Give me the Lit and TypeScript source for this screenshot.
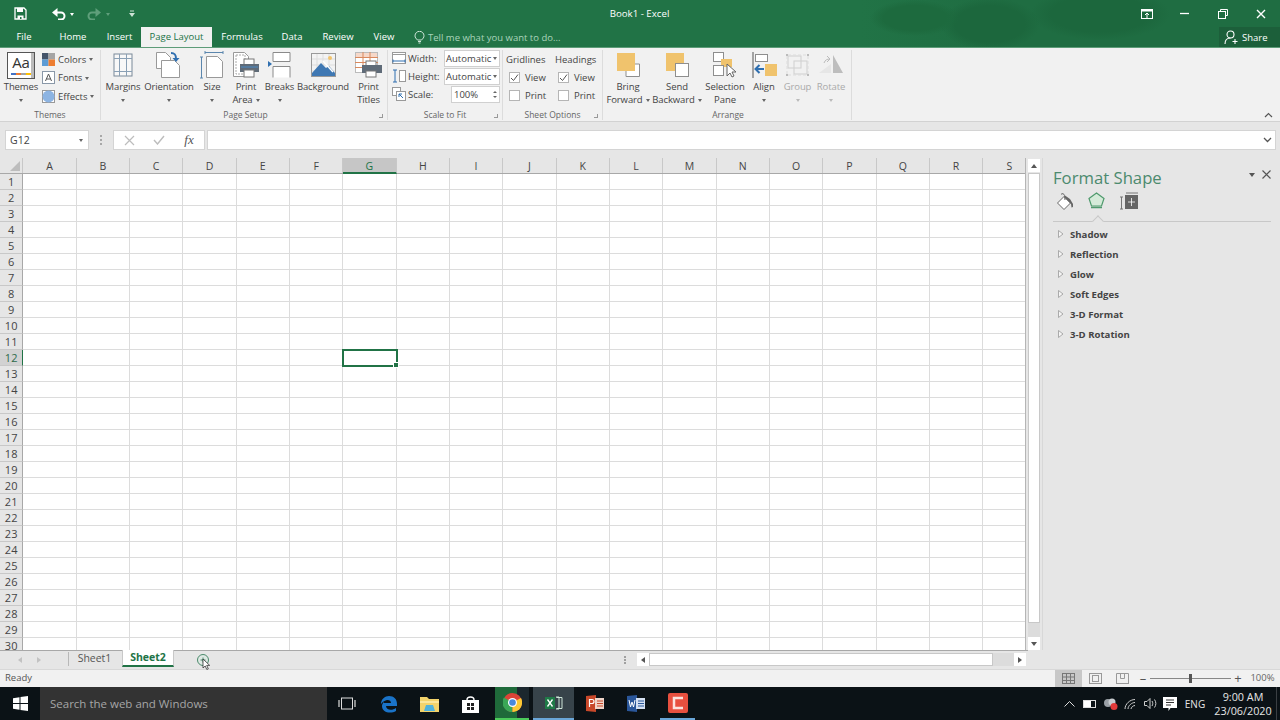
import { LitElement, html, css } from "lit";
import { customElement } from "lit/decorators.js";

const caret = html`<span class="caret"></span>`;
const S = "#7b8a99";

const icons: Record<string, any> = {
  margins: html`<svg width="22" height="26" viewBox="0 0 22 26"><rect x="2" y="2" width="18" height="22" fill="#f8f8f8" stroke="${S}"/><path d="M7.5 2v22M14.5 2v22M2 6.5h18M2 19.5h18" stroke="#8aa0b5" fill="none"/></svg>`,
  orientation: html`<svg width="28" height="28" viewBox="0 0 28 28"><path d="M1.5 1.5h9l5 5v11h-14z" fill="#fff" stroke="#999"/><path d="M6.5 9.5h13l5 5v12h-18z" fill="#fff" stroke="#999"/><path d="M16 2c4 0 5 2 5 6" stroke="#2f6fb0" stroke-width="2" fill="none"/><path d="M17.500 7h7l-3.500 4z" fill="#2f6fb0"/></svg>`,
  size: html`<svg width="24" height="28" viewBox="0 0 24 28"><path d="M5 1.500h18M5 0v3M23 0v3M1.500 6v21M0 6h3M0 27h3" stroke="#5b86ad" fill="none"/><path d="M6.500 5.500h11l5 5v16h-16z" fill="#fff" stroke="#999"/></svg>`,
  printArea: html`<svg width="28" height="28" viewBox="0 0 28 28"><path d="M1.500 1.500h11l4 4v20h-15z" fill="#fff" stroke="#999"/><rect x="4" y="4" width="9" height="19" fill="none" stroke="#aaa" stroke-dasharray="2 1"/><rect x="12" y="8" width="10" height="7" fill="#fff" stroke="#777"/><rect x="8" y="13" width="19" height="8" fill="#5f6b78"/><rect x="12" y="19" width="10" height="7" fill="#fff" stroke="#777"/><path d="M9 16h17" stroke="#4a8cc7"/></svg>`,
  breaks: html`<svg width="24" height="26" viewBox="0 0 24 26"><path d="M5 .5h17v9H5zM5 25.500v-11h17v11" fill="#fff" stroke="#8a8a8a"/><path d="M0 9l4 3-4 3z" fill="#2f6fb0"/></svg>`,
  background: html`<svg width="25" height="24" viewBox="0 0 25 24"><rect x=".5" y=".5" width="24" height="23" fill="#f3f3f3" stroke="#999"/><path d="M1 6h23M1 12h23M1 18h23M6 1v22M12 1v22M18 1v22" stroke="#ddd"/><circle cx="19" cy="5" r="2" fill="#f2c36b"/><path d="M1 20l9-10 5 5 3-2 6 7v3H1z" fill="#3f78b3"/><path d="M12 8l10 11" stroke="#fff" stroke-width="1.500"/></svg>`,
  printTitles: html`<svg width="27" height="26" viewBox="0 0 27 26"><rect x=".5" y=".5" width="22" height="20" fill="#fff" stroke="#bbb"/><path d="M1 1h21v4H1z" fill="#f6d8c9"/><path d="M0 5.500h23M0 10.500h23M0 15.500h23M8 0v21M15 0v21" stroke="#d9895e"/><rect x="11" y="9" width="10" height="6" fill="#fff" stroke="#777"/><rect x="7" y="13" width="20" height="8" fill="#5f6b78"/><rect x="11" y="19" width="10" height="6" fill="#fff" stroke="#777"/></svg>`,
  bring: html`<svg width="23" height="24" viewBox="0 0 23 24"><path d="M18 11h4.500v12.500H9V18" fill="#fff" stroke="#8e8e8e"/><rect width="18" height="18" fill="#f0c36d"/></svg>`,
  send: html`<svg width="23" height="24" viewBox="0 0 23 24"><rect width="18" height="18" fill="#f0c36d"/><rect x="9.500" y="10.500" width="13" height="13" fill="#fff" stroke="#8e8e8e"/></svg>`,
  selection: html`<svg width="24" height="26" viewBox="0 0 24 26"><rect x=".5" y=".5" width="10" height="9" fill="#fff" stroke="#8e8e8e"/><rect x="8" y="7" width="11" height="8" fill="#f0c36d"/><rect x=".5" y="13.500" width="10" height="10" fill="#fff" stroke="#8e8e8e"/><path d="M14 12l0 12 3-3 2 4 2-1-2-4 4 0z" fill="#fff" stroke="#666"/></svg>`,
  align: html`<svg width="25" height="26" viewBox="0 0 25 26"><path d="M1 0v26" stroke="#555"/><rect x="3.500" y="2.500" width="12" height="7" fill="#fff" stroke="#8e8e8e"/><rect x="13" y="12" width="12" height="12" fill="#f0c36d"/><path d="M12 17H4M7.500 13l-4 4 4 4" stroke="#2f6fb0" stroke-width="2" fill="none"/></svg>`,
  group: html`<svg width="25" height="24" viewBox="0 0 25 24"><rect x="3" y="3" width="13" height="12" fill="none" stroke="#cfcfcf"/><rect x="9" y="8" width="13" height="13" fill="none" stroke="#cfcfcf"/><path d="M1 1h2v2H1zM22 1h2v2h-2zM1 21h2v2H1zM22 21h2v2h-2z" fill="#bbb"/><path d="M3 2h19M2 3v18M23 3v18M3 22h19" stroke="#ddd" stroke-dasharray="3 2"/></svg>`,
  rotate: html`<svg width="26" height="20" viewBox="0 0 26 20"><path d="M15 0L25 18H15z" fill="#bdbdbd"/><path d="M1 18L13 9v9z" fill="#e6e6e6"/><path d="M6 8c1-3 3-4 6-4M9 1l3 3-3 3" stroke="#bbb" fill="none"/></svg>`,
};

const pageSetup = [
  ["Margins", "", 38, "margins"],
  ["Orientation", "", 54, "orientation"],
  ["Size", "", 32, "size"],
  ["Print", "Area", 36, "printArea"],
  ["Breaks", "", 31, "breaks"],
  ["Background", "-", 56, "background"],
  ["Print", "Titles", 35, "printTitles"],
];
const arrange = [
  ["Bring", "Forward", 46, "bring", 0, 1],
  ["Send", "Backward", 52, "send", 0, 1],
  ["Selection", "Pane", 44, "selection", 0, 0],
  ["Align", "", 34, "align", 0, 0],
  ["Group", "", 33, "group", 1, 0],
  ["Rotate", "", 34, "rotate", 1, 0],
];
const COLS = "ABCDEFGHIJKLMNOPQRS".split("");
const ROWS = Array.from({ length: 30 }, (_, i) => i + 1);
const TABS: [string, number][] = [["File", 48], ["Home", 50], ["Insert", 43], ["Page Layout", 71], ["Formulas", 60], ["Data", 40], ["Review", 52], ["View", 40]];
const PANEL = ["Shadow", "Reflection", "Glow", "Soft Edges", "3-D Format", "3-D Rotation"];

@customElement("app-root")
export class AppRoot extends LitElement {
  static styles = css`
    :host { display: block; width: 1280px; height: 720px; overflow: hidden; font-family: "Open Sans", "Noto Sans", sans-serif; font-size: 9.500px; color: #444; background: #e6e6e6; }
    * { box-sizing: border-box; }
    svg { display: block; }
    .app { width: 1280px; height: 720px; display: flex; flex-direction: column; }

    .head { height: 48px; flex: none; color: #fff; border-bottom: 1px solid #5d9c78;
      background-color: #217346;
      background-image:
        radial-gradient(ellipse 45px 18px at 915px 18px, #1d6a3e 70%, transparent 100%),
        radial-gradient(ellipse 50px 26px at 990px 24px, #1c673d 70%, transparent 100%),
        radial-gradient(ellipse 70px 26px at 1100px 14px, #1c673d 70%, transparent 100%),
        linear-gradient(90deg, #217346 0, #217346 860px, #1f6d42 1000px, #1f6d42 1280px); }
    .title { height: 27px; display: flex; align-items: center; padding-left: 14px; position: relative; }
    .qat { display: flex; align-items: center; width: 559px; gap: 0; }
    .qat .q1 { width: 38px; } .qat .q2 { width: 18px; } .qat .q3 { width: 17px; } .qat .q4 { width: 19px; } .qat .q5 { width: 23px; }
    .qcaret { display: block; width: 0; height: 0; border: 2.5px solid transparent; border-top: 3px solid #fff; margin-top: 3px; }
    .qcaret.dim { border-top-color: #5f9f7b; }
    .doc { width: 129px; text-align: center; font-size: 9.700px; margin-left: 2px; }
    .winbtns { margin-left: auto; display: flex; align-items: center; }
    .winbtns div { width: 38px; display: flex; justify-content: center; }
    .tabs { height: 20px; display: flex; align-items: stretch; font-size: 9.500px; }
    .tab { display: flex; align-items: center; justify-content: center; padding-bottom: 1px; white-space: nowrap; }
    .tab.active { background: #f1f1f1; color: #217346; }
    .tell { display: flex; align-items: center; gap: 3px; margin-left: 10px; color: #a9d3bb; font-size: 9.500px; }
    .share { margin-left: auto; width: 61px; background: #1c5f3a; display: flex; align-items: center; padding-left: 5px; gap: 3px; font-size: 9.500px; }

    .ribbon { height: 74px; flex: none; background: #f1f1f1; display: flex; padding-top: 2px; border-bottom: 1px solid #d2d2d2; position: relative; }
    .grp { display: flex; flex-direction: column; border-right: 1px solid #dcdcdc; height: 70px; position: relative; }
    .gbody { height: 58px; flex: none; display: flex; }
    .glabel { height: 12px; flex: none; margin-top: 1px; line-height: 12px; text-align: center; font-size: 8.500px; color: #666; }
    .launch { position: absolute; right: 4px; bottom: 2px; width: 4px; height: 4px; border-right: 1px solid #999; border-bottom: 1px solid #999; }
    .g-themes { width: 101px; } .g-page { width: 287px; padding-left: 3px; } .g-scale { width: 115px; } .g-sheet { width: 100px; } .g-arr { width: 249px; padding-left: 2px; }
    .big { display: flex; flex-direction: column; align-items: center; font-size: 9.500px; letter-spacing: -.1px; line-height: 13px; white-space: nowrap; flex: none; }
    .big.dis { color: #aaa; }
    .big.dis .caret { border-top-color: #bbb; }
    .ico { height: 30px; display: flex; align-items: center; justify-content: center; width: 100%; }
    .lbl { height: 13px; display: flex; align-items: center; justify-content: center; gap: 3px; }
    .caret { display: inline-block; width: 0; height: 0; border: 2.500px solid transparent; border-top: 3px solid #666; margin-top: 3px; }
    .themes { width: 42px; }
    .aa { width: 28px; height: 27px; border: 1px solid #555; background: #fff; box-shadow: inset -3px 0 0 #bbb; display: flex; flex-direction: column; align-items: center; font-size: 15px; line-height: 19px; color: #333; }
    .strip { width: 20px; height: 2px; margin-top: 1px; background: linear-gradient(90deg, #4472c4 25%, #ed7d31 25% 50%, #a5a5a5 50% 75%, #ffc000 75%); }
    .themeopts { display: flex; flex-direction: column; }
    .topt { height: 18.500px; display: flex; align-items: center; gap: 3px; white-space: nowrap; }
    .scalecol { display: flex; flex-direction: column; padding: 0 0 0 4px; width: 100%; margin-top: -1px; }
    .srow { height: 18px; display: flex; align-items: center; gap: 2px; flex: none; }
    .srow .sl { width: 34px; }
    .sel { width: 56px; height: 17px; background: #fff; border: 1px solid #d0d0d0; display: flex; align-items: center; justify-content: space-between; padding: 0 2px 0 1px; overflow: hidden; white-space: nowrap; }
    .sel.num { width: 49px; margin-left: 7px; padding-left: 2px; }
    .spin { display: flex; flex-direction: column; gap: 3px; }
    .spin i { display: block; width: 0; height: 0; border: 2px solid transparent; }
    .spin i:first-child { border-bottom: 2.500px solid #666; border-top: 0; }
    .spin i:last-child { border-top: 2.500px solid #666; border-bottom: 0; }
    .sheetcol { display: flex; flex-direction: column; padding-left: 3px; width: 49px; }
    .sh { height: 18px; flex: none; display: flex; align-items: center; white-space: nowrap; padding-top: 1px; }
    .chk { height: 18px; flex: none; display: flex; align-items: center; gap: 5px; padding-left: 3px; }
    .box { width: 11px; height: 11px; background: #fff; border: 1px solid #b5b5b5; display: flex; align-items: center; justify-content: center; }
    .collapse { position: absolute; right: 7px; bottom: 3px; }

    .fbar { height: 36px; flex: none; display: flex; padding: 8px 4px 8px 5px; background: #e6e6e6; }
    .namebox { width: 84px; background: #fff; border: 1px solid #d4d4d4; display: flex; align-items: center; justify-content: space-between; padding: 0 5px 0 4px; font-size: 10.500px; }
    .dots { width: 24px; display: flex; flex-direction: column; gap: 2px; align-items: center; justify-content: center; }
    .dots i { width: 2px; height: 2px; background: #a8a8a8; display: block; }
    .fxbox { width: 92px; background: #fff; border: 1px solid #d4d4d4; display: flex; align-items: center; }
    .fxbox div { width: 31px; display: flex; justify-content: center; }
    .fx { font-family: "Liberation Serif", serif; font-style: italic; font-size: 13px; color: #555; }
    .finput { flex: 1; margin-left: 2px; background: #fff; border: 1px solid #d4d4d4; display: flex; align-items: center; justify-content: flex-end; padding-right: 3px; }

    .work { height: 511px; flex: none; display: flex; }
    .left { width: 1043px; display: flex; flex-direction: column; }
    .gridwrap { height: 492px; flex: none; display: flex; }
    .grid { width: 1026px; height: 492px; overflow: hidden; background: #fff; border-right: 1px solid #b5b5b5; }
    .hrow { display: flex; height: 16px; background: #e6e6e6; border-bottom: 1px solid #a8a8a8; }
    .corner { width: 23.300px; flex: none; border-right: 1px solid #c8c8c8; position: relative; }
    .corner::after { content: ""; position: absolute; right: 2px; bottom: 2px; border: 5px solid transparent; border-right-color: #bdbdbd; border-bottom-color: #bdbdbd; }
    .chead { width: 53.330px; flex: none; text-align: center; font-size: 10.500px; line-height: 16px; border-right: 1px solid #c8c8c8; }
    .chead.on { background: #c6c6c6; border-bottom: 2px solid #217346; color: #217346; height: 16px; }
    .row { display: flex; height: 16px; }
    .rhead { width: 23.300px; flex: none; background: #e6e6e6; border-right: 1px solid #a8a8a8; border-bottom: 1px solid #c8c8c8; text-align: center; font-size: 11px; line-height: 15px; }
    .rhead.on { background: #d2d2d2; color: #2d6b4a; border-right: 1px solid #217346; }
    .cell { width: 53.330px; flex: none; border-right: 1px solid #dcdcdc; border-bottom: 1px solid #dcdcdc; position: relative; }
    .cell.sel2 { outline: 2px solid #217346; outline-offset: -1px; z-index: 2; }
    .cell.sel2::after { content: ""; position: absolute; right: -3px; bottom: -3px; width: 4px; height: 4px; background: #217346; border: 1px solid #fff; box-sizing: content-box; }
    .vs { width: 17px; padding: 1px 2px 0 2px; display: flex; flex-direction: column; background: #e6e6e6; border-right: 1px solid #d8d8d8; }
    .vs .arrow { height: 13px; background: #fff; display: flex; align-items: center; justify-content: center; flex: none; }
    .vs .thumb { height: 450px; background: #fff; border: 1px solid #c8c8c8; margin-top: 1px; flex: none; }
    .vs .track { flex: 1; background: #dcdcdc; }
    .up { width: 0; height: 0; border: 3px solid transparent; border-bottom: 4px solid #555; border-top: 0; }
    .dn { width: 0; height: 0; border: 3.500px solid transparent; border-top: 4px solid #555; border-bottom: 0; }
    .lt { width: 0; height: 0; border: 3px solid transparent; border-right: 4px solid #555; border-left: 0; }
    .rt { width: 0; height: 0; border: 3px solid transparent; border-left: 4px solid #555; border-right: 0; }
    .sheets { height: 19px; flex: none; display: flex; background: #e6e6e6; border-top: 1px solid #a8a8a8; width: 1028px; position: relative; font-size: 10.500px; }
    .navs { width: 68px; display: flex; align-items: center; padding-left: 18px; gap: 15px; }
    .navs .lt { border-right-color: #c2c2c2; } .navs .rt { border-left-color: #c2c2c2; }
    .vbar { width: 1px; height: 14px; background: #b8b8b8; margin: 1px 0 0 0; }
    .tabsheet { width: 51px; height: 13px; display: flex; align-items: center; justify-content: center; color: #555; }
    .tabsheet.on { width: 52px; height: 17px; background: #fff; color: #217346; font-weight: 700; border: 1px solid #c8c8c8; border-top: 0; border-bottom: 2px solid #217346; margin: -1px 0 0 2px; padding-bottom: 1px; }
    .plus { margin-left: 21px; margin-top: 1px; position: relative; width: 20px; }
    .hs { margin-left: auto; display: flex; align-items: center; width: 415px; padding: 0 2px 1px 0; height: 100%; }
    .hdots { display: flex; flex-direction: column; gap: 1px; width: 24px; align-items: center; }
    .hdots i { width: 2px; height: 2px; background: #a0a0a0; display: block; }
    .hsbtn { width: 12px; height: 13px; background: #fff; display: flex; align-items: center; justify-content: center; flex: none; }
    .hthumb { width: 344px; height: 13px; background: #fff; border: 1px solid #c8c8c8; flex: none; }
    .htrack { flex: 1; height: 13px; background: #dcdcdc; }

    .panel { width: 237px; padding: 8px 10px 0 10px; position: relative; background: #e6e6e6; }
    .ptitle { font-size: 16.700px; line-height: 23px; color: #4c8a6e; }
    .pctl { position: absolute; top: 12px; right: 9px; display: flex; gap: 7px; align-items: center; }
    .picons { display: flex; height: 22px; align-items: center; padding-left: 3px; margin-top: 1px; }
    .picons div { width: 32px; }
    .pdiv { height: 10px; border-bottom: 1px solid #c8c8c8; position: relative; margin: 0 0 2px 0; width: 218px; }
    .pdiv::after { content: ""; position: absolute; left: 41px; bottom: -4px; width: 7px; height: 7px; background: #e6e6e6; border-left: 1px solid #c8c8c8; border-top: 1px solid #c8c8c8; transform: rotate(45deg); }
    .pitem { height: 20px; display: flex; align-items: center; gap: 6px; padding-left: 5px; font-weight: 700; font-size: 9.600px; color: #444; }

    .status { height: 18px; flex: none; background: #f1f1f1; border-top: 1px solid #d8d8d8; display: flex; align-items: stretch; padding-left: 5px; font-size: 9.500px; color: #555; }
    .ready { width: 1050px; line-height: 16px; flex: none; }
    .vw { width: 27px; flex: none; display: flex; align-items: center; justify-content: center; }
    .vw.on { background: #c8c8c8; }
    .zoom { display: flex; align-items: center; padding-left: 3px; width: 106px; flex: none; }
    .ztrack { width: 81px; flex: none; height: 1px; background: #888; margin: 0 3px; display: flex; justify-content: center; align-items: center; }
    .zthumb { width: 3px; height: 9px; background: #555; flex: none; }
    .zp { font-size: 13px; color: #555; width: 8px; line-height: 13px; text-align: center; flex: none; }
    .zpct { width: 38px; flex: none; padding-left: 3px; text-align: center; line-height: 16px; color: #666; }

    .taskbar { height: 33px; flex: none; background: #0b1216; display: flex; align-items: center; color: #e6e6e6; }
    .start { width: 40px; display: flex; justify-content: center; }
    .search { width: 287px; height: 33px; background: #333; color: #a6a6a6; font-size: 11.500px; display: flex; align-items: center; padding-left: 10px; }
    .tb { height: 33px; display: flex; align-items: center; justify-content: center; flex: none; position: relative; }
    .t-view { width: 40px; } .t-edge { width: 42px; } .t-folder { width: 41px; } .t-store { width: 41px; }
    .t-chrome { width: 34px; margin: 0 4px 0 4px; background: linear-gradient(90deg, #1f6a3a 65%, #1c282e 65%); border-bottom: 2px solid #4ccb5a; }
    .t-excel { width: 41px; background: #37434a; border-bottom: 2px solid #6aa6d8; }
    .t-ppt { width: 41px; } .t-word { width: 41px; } .t-cam { border-bottom: 2px solid #6aa6d8; width: 35px; margin-left: 4px; }
    .tray { margin-left: auto; display: flex; align-items: center; height: 33px; margin-right: 3px; border-right: 1px solid #3a3f43; }
    .tray > div { display: flex; justify-content: center; align-items: center; flex: none; }
    .t20 { width: 20px; } .t22 { width: 22px; } .t18 { width: 18px; }
    .eng { font-size: 10px; width: 28px; }
    .clock { width: 66px; flex-direction: column; font-size: 10.800px; line-height: 14px; margin-left: 1px; text-align: center; }
  `;

  private big(b: any[]) {
    const [l1, l2, w, ic, dis, hasCaret] = b;
    return html`<div class="big ${dis ? "dis" : ""}" style="width:${w}px">
      <div class="ico">${icons[ic]}</div>
      <div class="lbl">${l1}</div>
      <div class="lbl">${l2 === "-" ? "" : l2 ? html`${l2}${hasCaret || (l1 === "Print" && l2 === "Area") ? caret : ""}` : caret}</div>
    </div>`;
  }

  private ribbon() {
    return html`<div class="ribbon">
      <div class="grp g-themes">
        <div class="gbody">
          <div class="big themes">
            <div class="ico"><div class="aa">Aa<span class="strip"></span></div></div>
            <div class="lbl">Themes</div>
            <div class="lbl">${caret}</div>
          </div>
          <div class="themeopts">
            <div class="topt"><svg width="13" height="13" viewBox="0 0 13 13"><rect width="6.500" height="6.500" fill="#44546a"/><rect x="6.500" width="6.500" height="6.500" fill="#a5a5a5"/><rect y="6.500" width="6.500" height="6.500" fill="#5b9bd5"/><rect x="6.500" y="6.500" width="6.500" height="6.500" fill="#ed7d31"/></svg>Colors ${caret}</div>
            <div class="topt"><svg width="13" height="13" viewBox="0 0 13 13"><rect x=".5" y=".5" width="12" height="12" fill="#fff" stroke="#8a98a8"/><path d="M3.500 10L6.500 3l3 7M4.500 8h4" stroke="#555" fill="none"/></svg>Fonts ${caret}</div>
            <div class="topt"><svg width="13" height="13" viewBox="0 0 13 13"><rect x=".5" y=".5" width="12" height="12" fill="#fff" stroke="#999"/><circle cx="6.500" cy="6.500" r="6" fill="#8db4e2"/></svg>Effects ${caret}</div>
          </div>
        </div>
        <div class="glabel">Themes</div>
      </div>
      <div class="grp g-page">
        <div class="gbody">${pageSetup.map((b) => this.big(b))}</div>
        <div class="glabel">Page Setup</div><span class="launch"></span>
      </div>
      <div class="grp g-scale">
        <div class="gbody"><div class="scalecol">
          <div class="srow"><svg width="14" height="14" viewBox="0 0 14 14"><rect x=".5" y="1.500" width="13" height="11" fill="#fff" stroke="#999"/><path d="M1 3.500h12" stroke="#999"/><path d="M1 10h12M1 8.500v3M13 8.500v3" stroke="#2f6fb0"/></svg><span class="sl">Width:</span><div class="sel">Automatic${caret}</div></div>
          <div class="srow"><svg width="14" height="14" viewBox="0 0 14 14"><path d="M3 1v12M1 1h4M1 13h4" stroke="#2f6fb0"/><rect x="7.500" y="1.500" width="6" height="11" fill="#fff" stroke="#999"/></svg><span class="sl">Height:</span><div class="sel">Automatic${caret}</div></div>
          <div class="srow"><svg width="14" height="14" viewBox="0 0 14 14"><rect x=".5" y=".5" width="8" height="8" fill="#fff" stroke="#999"/><rect x="4.500" y="4.500" width="9" height="9" fill="#fff" stroke="#999"/><path d="M7 7l4 4M7 7h3M7 7v3" stroke="#2f6fb0"/></svg><span class="sl">Scale:</span><div class="sel num">100%<span class="spin"><i></i><i></i></span></div></div>
        </div></div>
        <div class="glabel">Scale to Fit</div><span class="launch"></span>
      </div>
      <div class="grp g-sheet">
        <div class="gbody">
          ${["Gridlines", "Headings"].map((h) => html`<div class="sheetcol">
            <div class="sh">${h}</div>
            <div class="chk"><span class="box"><svg width="9" height="9" viewBox="0 0 9 9"><path d="M1 5l2.500 2.500L8 1.500" stroke="#555" fill="none"/></svg></span>View</div>
            <div class="chk"><span class="box"></span>Print</div>
          </div>`)}
        </div>
        <div class="glabel">Sheet Options</div><span class="launch"></span>
      </div>
      <div class="grp g-arr">
        <div class="gbody">${arrange.map((b) => this.big(b))}</div>
        <div class="glabel">Arrange</div>
      </div>
      <svg class="collapse" width="9" height="6" viewBox="0 0 9 6"><path d="M1 5l3.500-3.500L8 5" stroke="#555" stroke-width="1.200" fill="none"/></svg>
    </div>`;
  }

  private grid() {
    return html`<div class="grid">
      <div class="hrow"><div class="corner"></div>${COLS.map((c) => html`<div class="chead ${c === "G" ? "on" : ""}">${c}</div>`)}</div>
      ${ROWS.map((r) => html`<div class="row">
        <div class="rhead ${r === 12 ? "on" : ""}">${r}</div>
        ${COLS.map((c) => html`<div class="cell ${r === 12 && c === "G" ? "sel2" : ""}"></div>`)}
      </div>`)}
    </div>`;
  }

  render() {
    return html`<div class="app">
      <div class="head">
        <div class="title">
          <div class="qat">
            <div class="q1"><svg width="13" height="13" viewBox="0 0 13 13"><path d="M1 1h9l2 2v9H1z" fill="none" stroke="#fff" stroke-width="1.300"/><path d="M3 1h6v4H3zM3.500 8.500h6V12h-6z" fill="#fff"/><path d="M6 10h1.500v2H6z" fill="#217346"/></svg></div>
            <div class="q2"><svg width="14" height="12" viewBox="0 0 14 12"><path d="M3 4.500h6a3.500 3.500 0 0 1 0 7H6" stroke="#fff" stroke-width="2" fill="none"/><path d="M5.500 0L0 4.500 5.500 9z" fill="#fff"/></svg></div>
            <div class="q3"><span class="qcaret"></span></div>
            <div class="q4"><svg width="14" height="12" viewBox="0 0 14 12"><path d="M11 4.500H5a3.500 3.500 0 0 0 0 7h3" stroke="#5f9f7b" stroke-width="2" fill="none"/><path d="M8.500 0L14 4.500 8.500 9z" fill="#5f9f7b"/></svg></div>
            <div class="q5"><span class="qcaret dim"></span></div>
            <div class="q6"><svg width="6" height="8" viewBox="0 0 6 8"><path d="M1 1h4" stroke="#cfe3d7"/><path d="M0 3h6L3 7z" fill="#cfe3d7"/></svg></div>
          </div>
          <div class="doc">Book1 - Excel</div>
          <div class="winbtns">
            <div><svg width="12" height="10" viewBox="0 0 12 10"><rect x=".5" y=".5" width="11" height="9" fill="none" stroke="#fff"/><path d="M0 1.500h12" stroke="#fff" stroke-width="2"/><path d="M6 9V4M4 6l2-2 2 2" stroke="#fff" fill="none"/></svg></div>
            <div><svg width="10" height="3" viewBox="0 0 10 3"><path d="M0 1.500h9" stroke="#fff" stroke-width="1.300"/></svg></div>
            <div><svg width="10" height="10" viewBox="0 0 10 10"><path d="M2.500 2.500V.5h7v6h-2" fill="none" stroke="#fff"/><rect x=".5" y="2.500" width="7" height="7" fill="none" stroke="#fff"/></svg></div>
            <div><svg width="10" height="10" viewBox="0 0 10 10"><path d="M1 1l8 8M9 1l-8 8" stroke="#fff" stroke-width="1.400"/></svg></div>
          </div>
        </div>
        <div class="tabs">
          ${TABS.map(([t, w]) => html`<div class="tab ${t === "Page Layout" ? "active" : ""}" style="width:${w}px">${t}</div>`)}
          <div class="tell"><svg width="11" height="13" viewBox="0 0 11 13"><path d="M3.500 9C2 7.500 1 6.500 1 4.800a4.500 4.500 0 0 1 9 0C10 6.500 9 7.500 7.500 9z" fill="none" stroke="#cfe6d9"/><path d="M4 10.500h3M4.500 12h2" stroke="#cfe6d9"/></svg>Tell me what you want to do...</div>
          <div class="share"><svg width="15" height="15" viewBox="0 0 15 15"><circle cx="6.500" cy="4.500" r="3.500" fill="none" stroke="#fff" stroke-width="1.100"/><path d="M1 14c0-4 2-6 5.500-6" fill="none" stroke="#fff" stroke-width="1.100"/><path d="M11 9v5M8.500 11.500h5" stroke="#fff" stroke-width="1.100"/></svg>Share</div>
        </div>
      </div>
      ${this.ribbon()}
      <div class="fbar">
        <div class="namebox">G12${caret}</div>
        <div class="dots"><i></i><i></i><i></i></div>
        <div class="fxbox">
          <div><svg width="11" height="11" viewBox="0 0 11 11"><path d="M1 1l9 9M10 1l-9 9" stroke="#bdbdbd" stroke-width="1.200"/></svg></div>
          <div><svg width="12" height="10" viewBox="0 0 12 10"><path d="M1 5l3.500 4L11 1" stroke="#bdbdbd" stroke-width="1.400" fill="none"/></svg></div>
          <div><span class="fx">fx</span></div>
        </div>
        <div class="finput"><svg width="9" height="6" viewBox="0 0 9 6"><path d="M1 1l3.500 3.500L8 1" stroke="#555" stroke-width="1.300" fill="none"/></svg></div>
      </div>
      <div class="work">
        <div class="left">
          <div class="gridwrap">
            ${this.grid()}
            <div class="vs">
              <div class="arrow"><span class="up"></span></div>
              <div class="thumb"></div>
              <div class="track"></div>
              <div class="arrow"><span class="dn"></span></div>
            </div>
          </div>
          <div class="sheets">
            <div class="navs"><span class="lt"></span><span class="rt"></span></div>
            <div class="vbar"></div>
            <div class="tabsheet">Sheet1</div>
            <div class="tabsheet on">Sheet2</div>
            <div class="plus"><svg width="18" height="18" viewBox="0 0 18 18"><circle cx="8" cy="8" r="5.500" fill="#dfe9e4" stroke="#4b8a6c"/><path d="M8 5.500v5M5.500 8h5" stroke="#4b8a6c"/><path d="M8 7v9l2.200-2 1.600 3.500 1.500-.7-1.600-3.400h3z" fill="#fff" stroke="#333" stroke-width=".8"/></svg></div>
            <div class="hs">
              <div class="hdots"><i></i><i></i><i></i></div>
              <div class="hsbtn"><span class="lt"></span></div>
              <div class="hthumb"></div>
              <div class="htrack"></div>
              <div class="hsbtn"><span class="rt"></span></div>
            </div>
          </div>
        </div>
        <div class="panel">
          <div class="ptitle">Format Shape</div>
          <div class="pctl">
            <span class="dn"></span>
            <svg width="9" height="9" viewBox="0 0 9 9"><path d="M.5.500l8 8M8.500.500l-8 8" stroke="#555" stroke-width="1.100"/></svg>
          </div>
          <div class="picons">
            <div><svg width="18" height="17" viewBox="0 0 18 17"><path d="M8 3.500L14.500 10 8 16.500 1.500 10z" fill="#fff" stroke="#666"/><path d="M5 1.500c1-1.500 3-1 3.500 1L9 7" fill="none" stroke="#666"/><path d="M9 2.500l5 3.500 3 5v3l-1.500 .5L15 11l-6-6z" fill="#666"/></svg></div>
            <div><svg width="17" height="18" viewBox="0 0 17 18"><path d="M8.500 1L16 6.500 13.500 14h-10L1 6.500z" fill="#d5ead9" stroke="#4f9a6d" stroke-width="1.200"/><path d="M3 15.500h11" stroke="#4f9a6d" stroke-width="1.500"/></svg></div>
            <div><svg width="18" height="18" viewBox="0 0 18 18"><path d="M1.500 5v12M0 5h3M0 17h3M6 1h12" stroke="#777" fill="none"/><rect x="5" y="3" width="13" height="14" fill="#666"/><path d="M11.500 6v8M8 10h7" stroke="#fff" stroke-width=".8"/></svg></div>
          </div>
          <div class="pdiv"></div>
          ${PANEL.map((p) => html`<div class="pitem"><svg width="6" height="8" viewBox="0 0 6 8"><path d="M.5.500L5 4 .5 7.500z" fill="#f4f4f4" stroke="#999" stroke-width=".8"/></svg>${p}</div>`)}
        </div>
      </div>
      <div class="status">
        <div class="ready">Ready</div>
        <div class="vw on"><svg width="13" height="11" viewBox="0 0 13 11"><rect x=".5" y=".5" width="12" height="10" fill="none" stroke="#777"/><path d="M4.500 0v11M8.500 0v11M0 4h13M0 7.500h13" stroke="#777"/></svg></div>
        <div class="vw"><svg width="13" height="11" viewBox="0 0 13 11"><rect x=".5" y=".5" width="12" height="10" fill="none" stroke="#999"/><rect x="3.500" y="2.500" width="6" height="6" fill="none" stroke="#999"/></svg></div>
        <div class="vw"><svg width="13" height="11" viewBox="0 0 13 11"><path d="M.5 10.500V.5h12v10M4.500 1v4.500h4V1" fill="none" stroke="#999"/><path d="M0 10.500h13" stroke="#999"/></svg></div>
        <div class="zoom"><span class="zp">–</span><div class="ztrack"><span class="zthumb"></span></div><span class="zp">+</span></div>
        <div class="zpct">100%</div>
      </div>
      <div class="taskbar">
        <div class="start"><svg width="15" height="15" viewBox="0 0 15 15"><path d="M0 2.200L6.500 1.200V7H0zM7.500 1L15 0v7H7.500zM0 8h6.500v5.800L0 12.800zM7.500 8H15v7L7.500 14z" fill="#fff"/></svg></div>
        <div class="search">Search the web and Windows</div>
        <div class="tb t-view"><svg width="18" height="13" viewBox="0 0 18 13"><rect x="3.500" y="1" width="11" height="11" fill="none" stroke="#ddd"/><path d="M1 3v7M17 3v7" stroke="#ddd" stroke-width="1.200"/></svg></div>
        <div class="tb t-edge"><svg width="17" height="18" viewBox="0 0 17 18"><path d="M1 9C1 4 5 1 9 1c5 0 8 3 8 8v2H6c0 4 6 5 10 2v3c-5 3-14 2-14-5 0-2 1-3 2-4 0 1 0 1 0 1h7C11 5 6 3 1 9z" fill="#1a73c8"/></svg></div>
        <div class="tb t-folder"><svg width="19" height="16" viewBox="0 0 19 16"><path d="M0 1h7l2 2h10v13H0z" fill="#f3d36b"/><path d="M0 5h19v2H0z" fill="#fbe79d"/><path d="M6 9h7l2 6H4z" fill="#4fb2dd"/></svg></div>
        <div class="tb t-store"><svg width="17" height="18" viewBox="0 0 17 18"><path d="M0 5l17 0v13H0z" fill="#fff"/><path d="M5 5C5 1 12 1 12 5" fill="none" stroke="#fff" stroke-width="1.400"/><path d="M5 8h3v3H5zM9 8h3v3H9zM5 12h3v3H5zM9 12h3v3H9z" fill="#222"/></svg></div>
        <div class="tb t-chrome"><svg width="19" height="19" viewBox="0 0 19 19"><circle cx="9.500" cy="9.500" r="9.500" fill="#db4437"/><path d="M9.500 9.500L1 4.500A9.500 9.500 0 0 0 9.500 19z" fill="#3aa757"/><path d="M9.500 9.500V19A9.500 9.500 0 0 0 18 5z" fill="#fcc934"/><circle cx="9.500" cy="9.500" r="4.500" fill="#fff"/><circle cx="9.500" cy="9.500" r="3.300" fill="#4a89dc"/></svg></div>
        <div class="tb t-excel"><svg width="18" height="14" viewBox="0 0 18 14"><path d="M0 1h10v12H0z" fill="#1f7a47"/><path d="M2.500 3.500l5 7M7.500 3.500l-5 7" stroke="#fff" stroke-width="1.300"/><path d="M11.500 1.500h5.500v11h-5.500" fill="none" stroke="#cfe6d9"/><path d="M11 1h3v12h-3" fill="none" stroke="#cfe6d9"/></svg></div>
        <div class="tb t-ppt"><svg width="18" height="17" viewBox="0 0 18 17"><path d="M0 1l10-1v17L0 16z" fill="#c8482a"/><path d="M9 3h9v11H9z" fill="#f0d5c9"/><path d="M3.500 12V4.500H6a2 2 0 0 1 0 4H3.500" stroke="#fff" fill="none" stroke-width="1.200"/><path d="M11 6h6M11 8.500h6M11 11h6" stroke="#c8482a"/></svg></div>
        <div class="tb t-word"><svg width="18" height="17" viewBox="0 0 18 17"><path d="M0 1l10-1v17L0 16z" fill="#2a5699"/><path d="M9 3h9v11H9z" fill="#d5e1f2"/><path d="M2 5l1.500 7L5 7l1.500 5L8 5" stroke="#fff" fill="none"/><path d="M11 6h6M11 8.500h6M11 11h6" stroke="#2a5699"/></svg></div>
        <div class="tb t-cam"><svg width="20" height="20" viewBox="0 0 20 20"><rect width="20" height="20" rx="2" fill="#e8503f"/><path d="M15 5H6v10h9" fill="none" stroke="#fbe3de" stroke-width="2.500"/></svg></div>
        <div class="tray">
          <div class="t20"><svg width="11" height="7" viewBox="0 0 11 7"><path d="M.5 6.500l5-5 5 5" stroke="#ddd" fill="none"/></svg></div>
          <div class="t22"><svg width="14" height="8" viewBox="0 0 14 8"><rect x=".5" y=".5" width="12" height="7" fill="none" stroke="#ddd"/><rect x="1" y="1" width="7" height="6" fill="#fff"/></svg></div>
          <div class="t18"><svg width="15" height="13" viewBox="0 0 15 13"><circle cx="5" cy="6" r="4" fill="#9aa0a6"/><circle cx="9" cy="5" r="3.500" fill="#c8ccd0"/><circle cx="11" cy="9.500" r="3.500" fill="#e23a3a"/></svg></div>
          <div class="t22"><svg width="12" height="12" viewBox="0 0 12 12"><path d="M11 1.500C6 1.500 1 6 1 11M11 4.500C8 4.500 4 7.500 4 11M11 7.500c-2 0-4 2-4 3.500" stroke="#ccc" fill="none"/></svg></div>
          <div class="t18"><svg width="13" height="11" viewBox="0 0 13 11"><path d="M.5 3.500h2.500l3-3v10l-3-3H.5z" fill="none" stroke="#ccc"/><path d="M8 3c1 1.500 1 3.500 0 5M10.500 1.500c1.800 2.500 1.800 5.500 0 8" stroke="#ccc" fill="none"/></svg></div>
          <div class="t22"><svg width="14" height="14" viewBox="0 0 14 14"><path d="M0 0h14v11H7.500L5.500 14V11H0z" fill="#fff"/><path d="M3 3h8M3 5.500h8M3 8h5" stroke="#333"/></svg></div>
          <div class="eng">ENG</div>
          <div class="clock"><span>9:00 AM</span><span>23/06/2020</span></div>
        </div>
      </div>
    </div>`;
  }
}
